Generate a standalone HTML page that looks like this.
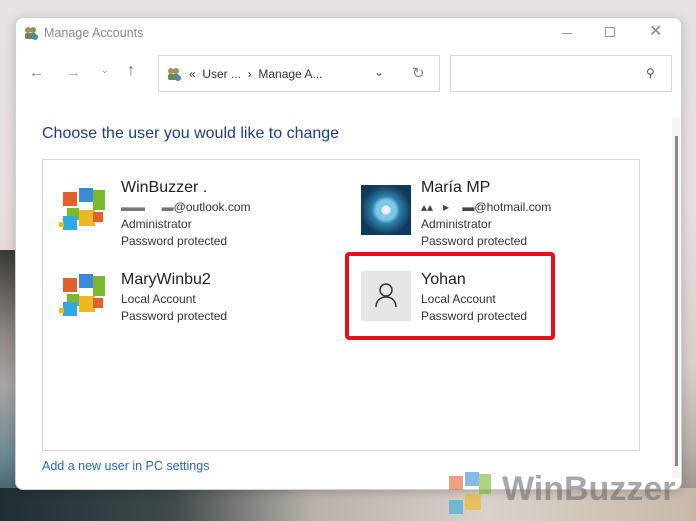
<!DOCTYPE html>
<html><head><meta charset="utf-8"><style>
*{margin:0;padding:0;box-sizing:border-box}
body{width:696px;height:521px;overflow:hidden;position:relative;font-family:"Liberation Sans",sans-serif;
background:linear-gradient(180deg,#e6e2e4 0%,#e9dede 40%,#d8cfcc 70%,#b8b0aa 86%,#8a8580 100%)}
.lake{position:absolute;left:0;top:250px;width:40px;height:271px;background:linear-gradient(180deg,#3b3a36 0%,#8c8582 30%,#a9a3a3 50%,#6f8a93 75%,#264b55 100%)}
.bottom{position:absolute;left:0;top:488px;width:696px;height:33px;background:linear-gradient(90deg,#1f2e33 0%,#404a4c 25%,#b9b2ab 45%,#d9d2cb 70%,#c9b8a8 100%)}
.win{position:absolute;left:15px;top:17px;width:667px;height:473px;background:#fff;border-radius:8px;border:1px solid #d0d0d0;box-shadow:0 2px 10px rgba(0,0,0,.2);overflow:hidden}
.t{position:absolute;font-size:12px;color:#888}
.box{position:absolute;border:1px solid #d9d9d9;background:#fff}
.name{position:absolute;font-size:16px;color:#222}
.sub{position:absolute;font-size:12px;color:#333;line-height:17px}
</style></head><body>
<div class="lake"></div><div class="bottom"></div>
<div class="win">
 <svg style="position:absolute;left:7px;top:7px" width="16" height="16"><circle cx="5" cy="5" r="3" fill="#b08a5a"/><circle cx="10" cy="5" r="3" fill="#7aa05a"/><rect x="2" y="8" width="11" height="6" rx="2" fill="#6a8a5a"/><circle cx="12" cy="12" r="3" fill="#4a88c8"/></svg>
 <div class="t" style="left:28px;top:8px;font-size:12.5px;color:#8a8a8a">Manage Accounts</div>
 <div style="position:absolute;left:546px;top:15px;width:10px;height:1px;background:#999"></div>
 <div style="position:absolute;left:589px;top:9px;width:10px;height:10px;border:1px solid #999"></div>
 <div style="position:absolute;left:633px;top:3px;font-size:16px;color:#888">✕</div>
 <div class="t" style="left:13px;top:46px;font-size:15px;color:#888">←</div>
 <div class="t" style="left:50px;top:46px;font-size:15px;color:#aaa">→</div>
 <div class="t" style="left:85px;top:47px;font-size:9px;color:#888">⌄</div>
 <div class="t" style="left:111px;top:44px;font-size:16px;color:#666">↑</div>
 <div class="box" style="left:142px;top:37px;width:282px;height:37px"></div>
 <svg style="position:absolute;left:150px;top:48px" width="16" height="16"><circle cx="5" cy="5" r="3" fill="#b08a5a"/><circle cx="10" cy="5" r="3" fill="#7aa05a"/><rect x="2" y="8" width="11" height="6" rx="2" fill="#6a8a5a"/><circle cx="12" cy="12" r="3" fill="#4a88c8"/></svg>
 <div class="t" style="left:173px;top:49px;color:#333">«&nbsp;&nbsp;User ...&nbsp;&nbsp;›&nbsp;&nbsp;Manage A...</div>
 <div class="t" style="left:358px;top:47px;color:#555">⌄</div>
 <div class="t" style="left:396px;top:46px;font-size:15px;color:#888">↻</div>
 <div class="box" style="left:434px;top:37px;width:222px;height:37px"></div>
 <div class="t" style="left:630px;top:48px;color:#555">⚲</div>
 <div style="position:absolute;left:656px;top:100px;width:8px;height:360px;background:#f4f4f4"></div>
 <div style="position:absolute;left:659px;top:118px;width:3px;height:330px;background:#888"></div>
 <div style="position:absolute;left:26px;top:107px;font-size:16px;color:#1e3f7a">Choose the user you would like to change</div>
 <div class="box" style="left:26px;top:141px;width:598px;height:292px"></div>
 <svg style="position:absolute;left:43px;top:166px" width="50" height="50"><rect x="4" y="8" width="14" height="14" fill="#e06030"/><rect x="20" y="4" width="14" height="14" fill="#3a8ad8"/><rect x="34" y="6" width="12" height="20" fill="#7ab830"/><rect x="8" y="24" width="12" height="12" fill="#7ab830"/><rect x="4" y="32" width="14" height="14" fill="#30a8e0"/><rect x="20" y="26" width="16" height="16" fill="#f0b820"/><rect x="34" y="28" width="10" height="10" fill="#e06030"/><rect x="0" y="38" width="5" height="5" fill="#f0b820"/></svg>
 <svg style="position:absolute;left:43px;top:252px" width="50" height="50"><rect x="4" y="8" width="14" height="14" fill="#e06030"/><rect x="20" y="4" width="14" height="14" fill="#3a8ad8"/><rect x="34" y="6" width="12" height="20" fill="#7ab830"/><rect x="8" y="24" width="12" height="12" fill="#7ab830"/><rect x="4" y="32" width="14" height="14" fill="#30a8e0"/><rect x="20" y="26" width="16" height="16" fill="#f0b820"/><rect x="34" y="28" width="10" height="10" fill="#e06030"/><rect x="0" y="38" width="5" height="5" fill="#f0b820"/></svg>
 <div class="name" style="left:105px;top:161px">WinBuzzer .</div>
 <div class="sub" style="left:105px;top:181px"><span style="color:#777">▬▬&nbsp;&nbsp;&nbsp;&nbsp;&nbsp;▬</span>@outlook.com<br>Administrator<br>Password protected</div>
 <div style="position:absolute;left:345px;top:167px;width:50px;height:50px;background:radial-gradient(circle at 50% 50%,#eef 0 4px,#7cc8e8 5px 10px,#2c7ea8 14px,#103a5a 25px)"></div>
 <div class="name" style="left:405px;top:161px">María MP</div>
 <div class="sub" style="left:405px;top:181px"><span style="color:#444">▴▴&nbsp;&nbsp;&nbsp;▸&nbsp;&nbsp;&nbsp;&nbsp;▬</span>@hotmail.com<br>Administrator<br>Password protected</div>
 <div class="name" style="left:105px;top:253px">MaryWinbu2</div>
 <div class="sub" style="left:105px;top:273px">Local Account<br>Password protected</div>
 <div style="position:absolute;left:329px;top:234px;width:210px;height:88px;border:4px solid #e3101e;border-radius:4px"></div>
 <div style="position:absolute;left:345px;top:253px;width:50px;height:50px;background:#e6e6e6"></div>
 <svg style="position:absolute;left:357px;top:263px" width="26" height="30" fill="none" stroke="#333" stroke-width="1.5"><circle cx="13" cy="9" r="6"/><path d="M3 26c0-6 4-10 10-10s10 4 10 10"/></svg>
 <div class="name" style="left:405px;top:253px">Yohan</div>
 <div class="sub" style="left:405px;top:273px">Local Account<br>Password protected</div>
 <div style="position:absolute;left:26px;top:441px;font-size:12.5px;color:#2a6aad">Add a new user in PC settings</div>
</div>
<svg style="position:absolute;left:445px;top:468px" width="50" height="50" opacity=".6"><rect x="4" y="8" width="14" height="14" fill="#e06030"/><rect x="20" y="4" width="14" height="14" fill="#3a8ad8"/><rect x="34" y="6" width="12" height="20" fill="#7ab830"/><rect x="4" y="32" width="14" height="14" fill="#30a8e0"/><rect x="20" y="26" width="16" height="16" fill="#f0b820"/></svg>
<div style="position:absolute;left:502px;top:470px;font-size:34px;font-weight:bold;color:rgba(110,110,110,.6)">WinBuzzer</div>
</body></html>
